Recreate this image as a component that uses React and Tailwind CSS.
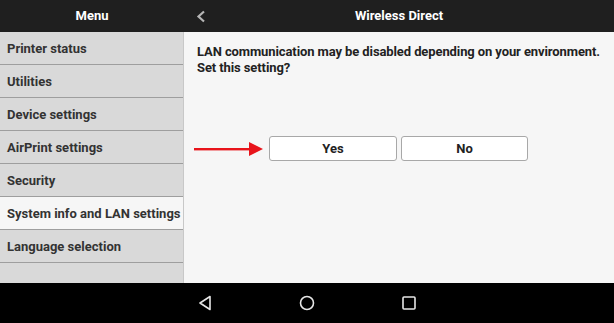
import React from 'react';

const menuItems = [
  'Printer status',
  'Utilities',
  'Device settings',
  'AirPrint settings',
  'Security',
  'System info and LAN settings',
  'Language selection',
];

const App = () => {
  return (
    <div
      className="w-[614px] h-[323px] flex flex-col overflow-hidden bg-black"
      style={{ fontFamily: 'Roboto, "Liberation Sans", sans-serif' }}
    >
      {/* Header */}
      <div className="h-[32px] flex bg-[#1f1f1f] text-white font-bold text-[13px]">
        <div className="w-[184px] flex items-center justify-center">Menu</div>
        <div className="flex-1 flex items-center relative">
          <svg className="absolute left-[12px] top-[10px]" width="10" height="13" viewBox="0 0 10 13">
            <path d="M8 1.5 L2.5 6.5 L8 11.5" fill="none" stroke="#b5b5b5" strokeWidth="2.2" />
          </svg>
          <div className="flex-1 text-center">Wireless Direct</div>
        </div>
      </div>

      <div className="flex h-[251px]">
        {/* Sidebar */}
        <div className="w-[184px] bg-[#d9d9d9] border-r border-[#c8c8c8] flex flex-col">
          {menuItems.map((item) => (
            <div
              key={item}
              className={`h-[33px] flex items-center pl-[7px] pt-[1px] border-b border-[#9e9e9e] text-[13px] font-bold text-[#333] ${
                item === 'System info and LAN settings' ? 'bg-[#f6f6f6]' : ''
              }`}
            >
              {item}
            </div>
          ))}
        </div>

        {/* Content */}
        <div className="flex-1 bg-[#f6f6f6] flex flex-col">
          <div className="pt-[12px] pl-[13px] text-[13px] leading-[16px] font-bold text-[#222] tracking-[-0.1px]">
            LAN communication may be disabled depending on your environment.
            <br />
            Set this setting?
          </div>
          <div className="mt-[60px] flex items-center">
            <svg className="ml-[10px] mr-[6px]" width="69" height="16" viewBox="0 0 69 16">
              <rect x="0" y="7" width="56" height="2.4" fill="#e8141b" />
              <path d="M55 1 L69 8 L55 15 Z" fill="#e8141b" />
            </svg>
            <div className="flex gap-[4px]">
              <button className="w-[128px] h-[25px] bg-white border border-[#a8a8a8] rounded-[3px] text-[13px] font-bold text-[#222]">
                Yes
              </button>
              <button className="w-[127px] h-[25px] bg-white border border-[#a8a8a8] rounded-[3px] text-[13px] font-bold text-[#222]">
                No
              </button>
            </div>
          </div>
        </div>
      </div>

      {/* Navigation bar */}
      <div className="flex-1 bg-black flex items-center justify-center gap-[87px]">
        <svg width="14" height="16" viewBox="0 0 14 16">
          <path d="M12 1.5 L2 8 L12 14.5 Z" fill="none" stroke="#e6e6e6" strokeWidth="1.6" strokeLinejoin="round" />
        </svg>
        <svg width="16" height="16" viewBox="0 0 16 16">
          <circle cx="8" cy="8" r="6.5" fill="none" stroke="#e6e6e6" strokeWidth="1.6" />
        </svg>
        <svg width="14" height="14" viewBox="0 0 14 14">
          <rect x="1" y="1" width="12" height="12" rx="1" fill="none" stroke="#e6e6e6" strokeWidth="1.6" />
        </svg>
      </div>
    </div>
  );
};

export default App;
